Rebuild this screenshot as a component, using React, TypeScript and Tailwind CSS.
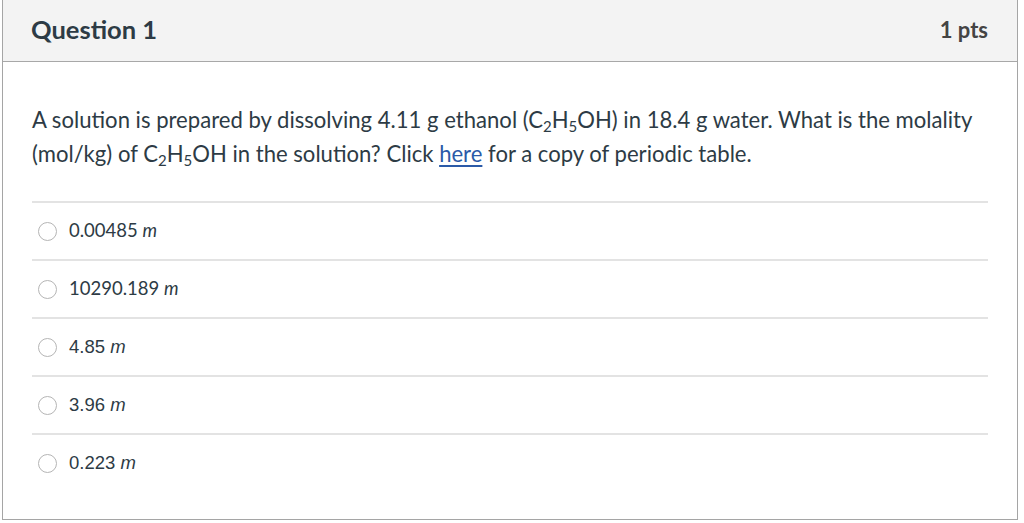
const answers = [
  { value: '0.00485', font: "font-['Lato']" },
  { value: '10290.189', font: "font-['Lato']" },
  { value: '4.85', font: "font-['Liberation_Sans']" },
  { value: '3.96', font: "font-['Liberation_Sans']" },
  { value: '0.223', font: "font-['Liberation_Sans']" },
]

const Sub = ({ children }: { children: string }) => (
  <span className="text-[15px] relative top-[4px] leading-none">{children}</span>
)

export default function App() {
  return (
    <div className="w-[1024px] h-[523px] bg-white font-['Lato',sans-serif] text-[#2d3b45]">
      <div className="ml-[2px] w-[1016px] h-[520px] border-x border-b border-[#a5a5a5]">
        <div className="h-[62px] bg-[#f3f3f3] border-b border-[#a8a8a8] flex items-center justify-between pl-[28px] pr-[29px]">
          <h2 className="text-[25.5px] font-bold text-[#2d3b45] leading-none pb-[2px]">Question 1</h2>
          <span className="text-[22px] font-bold text-[#444] leading-none pb-[2px]">1 pts</span>
        </div>

        <div className="px-[29px]">
          <p className="pt-[41px] pb-[30px] text-[22.1px] leading-[34px] text-[#2d3b45] pr-[8px]">
            A solution is prepared by dissolving 4.11 g ethanol (C<Sub>2</Sub>H<Sub>5</Sub>OH) in 18.4 g water. What is the molality (mol/kg) of C<Sub>2</Sub>H<Sub>5</Sub>OH in the solution? Click{' '}
            <a href="#" className="text-[#2b5aa8] underline underline-offset-[3px]">here</a> for a copy of periodic table.
          </p>

          <div className="w-[956px]">
            {answers.map(a => (
              <div key={a.value} className="border-t-2 border-[#e3e3e3] h-[58px] flex items-center pl-[6px]">
                <span className="w-[19px] h-[19px] rounded-full border border-[#b5b5b5] bg-white shrink-0" />
                <span className={`ml-[12px] text-[18.5px] text-[#2d3b45] ${a.font}`}>
                  {a.value} <i>m</i>
                </span>
              </div>
            ))}
          </div>
        </div>
      </div>
    </div>
  )
}
